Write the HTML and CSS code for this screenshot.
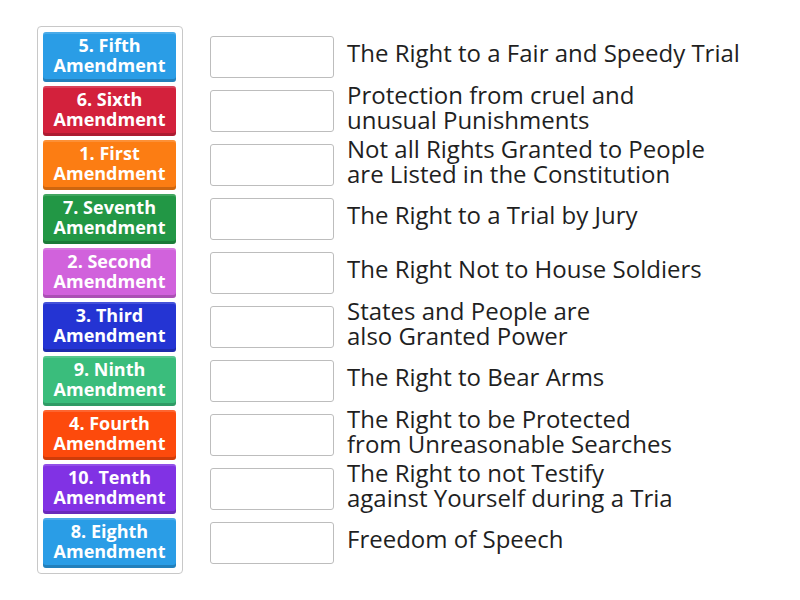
FILE: index.html
```html
<!DOCTYPE html>
<html>
<head>
<meta charset="utf-8">
<link rel="stylesheet" href="styles.css">
</head>
<body>
<div class="page">
  <div class="panel">
    <div class="tile c1">5. Fifth<br>Amendment</div>
    <div class="tile c2">6. Sixth<br>Amendment</div>
    <div class="tile c3">1. First<br>Amendment</div>
    <div class="tile c4">7. Seventh<br>Amendment</div>
    <div class="tile c5">2. Second<br>Amendment</div>
    <div class="tile c6">3. Third<br>Amendment</div>
    <div class="tile c7">9. Ninth<br>Amendment</div>
    <div class="tile c8">4. Fourth<br>Amendment</div>
    <div class="tile c9">10. Tenth<br>Amendment</div>
    <div class="tile c10">8. Eighth<br>Amendment</div>
  </div>
  <div class="rows">
    <div class="row"><div class="slot"></div><div class="desc">The Right to a Fair and Speedy Trial</div></div>
    <div class="row"><div class="slot"></div><div class="desc">Protection from cruel and<br>unusual Punishments</div></div>
    <div class="row"><div class="slot"></div><div class="desc">Not all Rights Granted to People<br>are Listed in the Constitution</div></div>
    <div class="row"><div class="slot"></div><div class="desc">The Right to a Trial by Jury</div></div>
    <div class="row"><div class="slot"></div><div class="desc">The Right Not to House Soldiers</div></div>
    <div class="row"><div class="slot"></div><div class="desc">States and People are<br>also Granted Power</div></div>
    <div class="row"><div class="slot"></div><div class="desc">The Right to Bear Arms</div></div>
    <div class="row"><div class="slot"></div><div class="desc">The Right to be Protected<br>from Unreasonable Searches</div></div>
    <div class="row"><div class="slot"></div><div class="desc">The Right to not Testify<br>against Yourself during a Tria</div></div>
    <div class="row"><div class="slot"></div><div class="desc">Freedom of Speech</div></div>
  </div>
</div>
</body>
</html>
```
FILE: styles.css
```css
html, body {
  margin: 0;
  padding: 0;
  background: #ffffff;
}
.page {
  display: flex;
  align-items: flex-start;
  padding: 26px 0 0 37px;
  font-family: "Open Sans", "DejaVu Sans", sans-serif;
}
.panel {
  display: flex;
  flex-direction: column;
  gap: 4px;
  padding: 5px 6px 5px 5px;
  border: 1px solid #c8c8c8;
  border-radius: 4px;
}
.tile {
  width: 133px;
  height: 50px;
  box-sizing: border-box;
  border-radius: 3px;
  color: #ffffff;
  font-weight: 700;
  font-size: 18px;
  line-height: 20px;
  text-align: center;
  white-space: nowrap;
  padding-top: 3px;
  box-shadow: inset 0 -3px 0 rgba(0,0,0,0.18), inset 0 2px 0 rgba(255,255,255,0.15);
}
.c1 { background: #2a9de6; }
.c2 { background: #d3213c; }
.c3 { background: #fc7d13; }
.c4 { background: #229745; }
.c5 { background: #d162dc; }
.c6 { background: #2434d3; }
.c7 { background: #3abd7c; }
.c8 { background: #fd4a0c; }
.c9 { background: #8132e4; }
.c10 { background: #2a9de6; }
.rows {
  display: flex;
  flex-direction: column;
  gap: 4px;
  padding-top: 6px;
  margin-left: 27px;
}
.row {
  height: 50px;
  display: flex;
  align-items: center;
}
.slot {
  width: 124px;
  height: 42px;
  box-sizing: border-box;
  border: 1px solid #bdbdbd;
  border-radius: 3px;
  flex: none;
}
.desc {
  margin-left: 13px;
  margin-bottom: 9px;
  font-size: 24px;
  line-height: 25px;
  color: #1f1f1f;
  white-space: nowrap;
}
```
